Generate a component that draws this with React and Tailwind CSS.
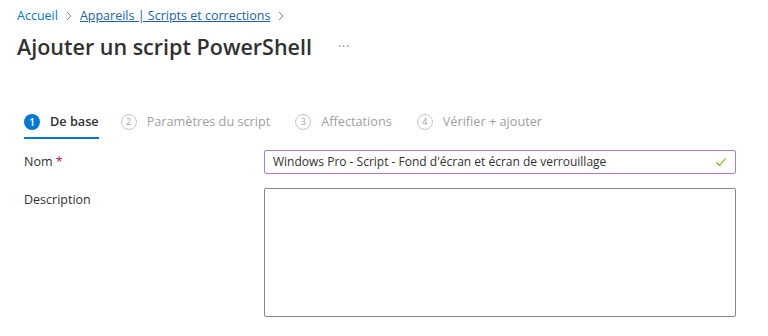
import React from "react";

function Step({ n, label, active }) {
  return (
    <div className="relative flex items-center h-[34px]">
      <div
        className={
          active
            ? "w-4 h-4 rounded-full bg-[#0078d4] text-white text-[10px] font-semibold flex items-center justify-center"
            : "w-4 h-4 rounded-full border border-[#c8c6c4] text-[#a19f9d] text-[9px] flex items-center justify-center"
        }
      >
        {n}
      </div>
      <span
        className={
          active
            ? "ml-[10px] text-[12.7px] font-semibold text-[#323130]"
            : "ml-[10px] text-[12.7px] text-[#a19f9d]"
        }
      >
        {label}
      </span>
      {active && <div className="absolute left-0 right-0 bottom-0 h-[2px] bg-[#0078d4]" />}
    </div>
  );
}

export default function App() {
  return (
    <div
      className="w-[768px] h-[336px] bg-white overflow-hidden"
      style={{ fontFamily: '"Open Sans", "Noto Sans", sans-serif' }}
    >
      <div className="pl-[17px] pt-[6px] flex items-center text-[12.5px] leading-[20px]">
        <span className="text-[#0078d4]">Accueil</span>
        <svg width="12" height="12" viewBox="0 0 12 12" className="mx-[5px]">
          <path d="M4 2l4 4-4 4" fill="none" stroke="#8a8886" strokeWidth="1" />
        </svg>
        <span className="text-[#2063a4] underline">Appareils | Scripts et corrections</span>
        <svg width="12" height="12" viewBox="0 0 12 12" className="mx-[5px]">
          <path d="M4 2l4 4-4 4" fill="none" stroke="#8a8886" strokeWidth="1" />
        </svg>
      </div>
      <div className="pl-[17px] mt-[6px] flex items-center h-[30px]">
        <h1 className="text-[21.5px] font-semibold text-[#323130] leading-[30px]">
          Ajouter un script PowerShell
        </h1>
        <span className="ml-[26px] text-[#8a8886] text-[12px] tracking-[1px]">···</span>
      </div>
      <div className="pl-[24px] mt-[43px] flex items-center">
        <Step n="1" label="De base" active />
        <div className="ml-[22px]"><Step n="2" label="Paramètres du script" /></div>
        <div className="ml-[25px]"><Step n="3" label="Affectations" /></div>
        <div className="ml-[25px]"><Step n="4" label="Vérifier + ajouter" /></div>
      </div>
      <div className="pl-[24px] pr-[32px] mt-[11px] flex flex-col gap-[14px]">
        <div className="flex items-center">
          <div className="w-[240px] text-[12.5px] text-[#323130]">
            Nom <span className="text-[#a4262c]">*</span>
          </div>
          <div className="flex-1 h-[24px] border border-[#b27cc9] rounded-[2px] flex items-center px-[8px]">
            <span className="flex-1 text-[12px] text-[#323130]">
              Windows Pro - Script - Fond d'écran et écran de verrouillage
            </span>
            <svg width="12" height="12" viewBox="0 0 12 12">
              <path d="M1.5 6.5l3 3 6-7" fill="none" stroke="#6bb700" strokeWidth="1.1" />
            </svg>
          </div>
        </div>
        <div className="flex items-start">
          <div className="w-[240px] text-[12.5px] text-[#323130] pt-[3px]">Description</div>
          <div className="flex-1 h-[129px] border border-[#8a8886] rounded-[2px]" />
        </div>
      </div>
    </div>
  );
}
